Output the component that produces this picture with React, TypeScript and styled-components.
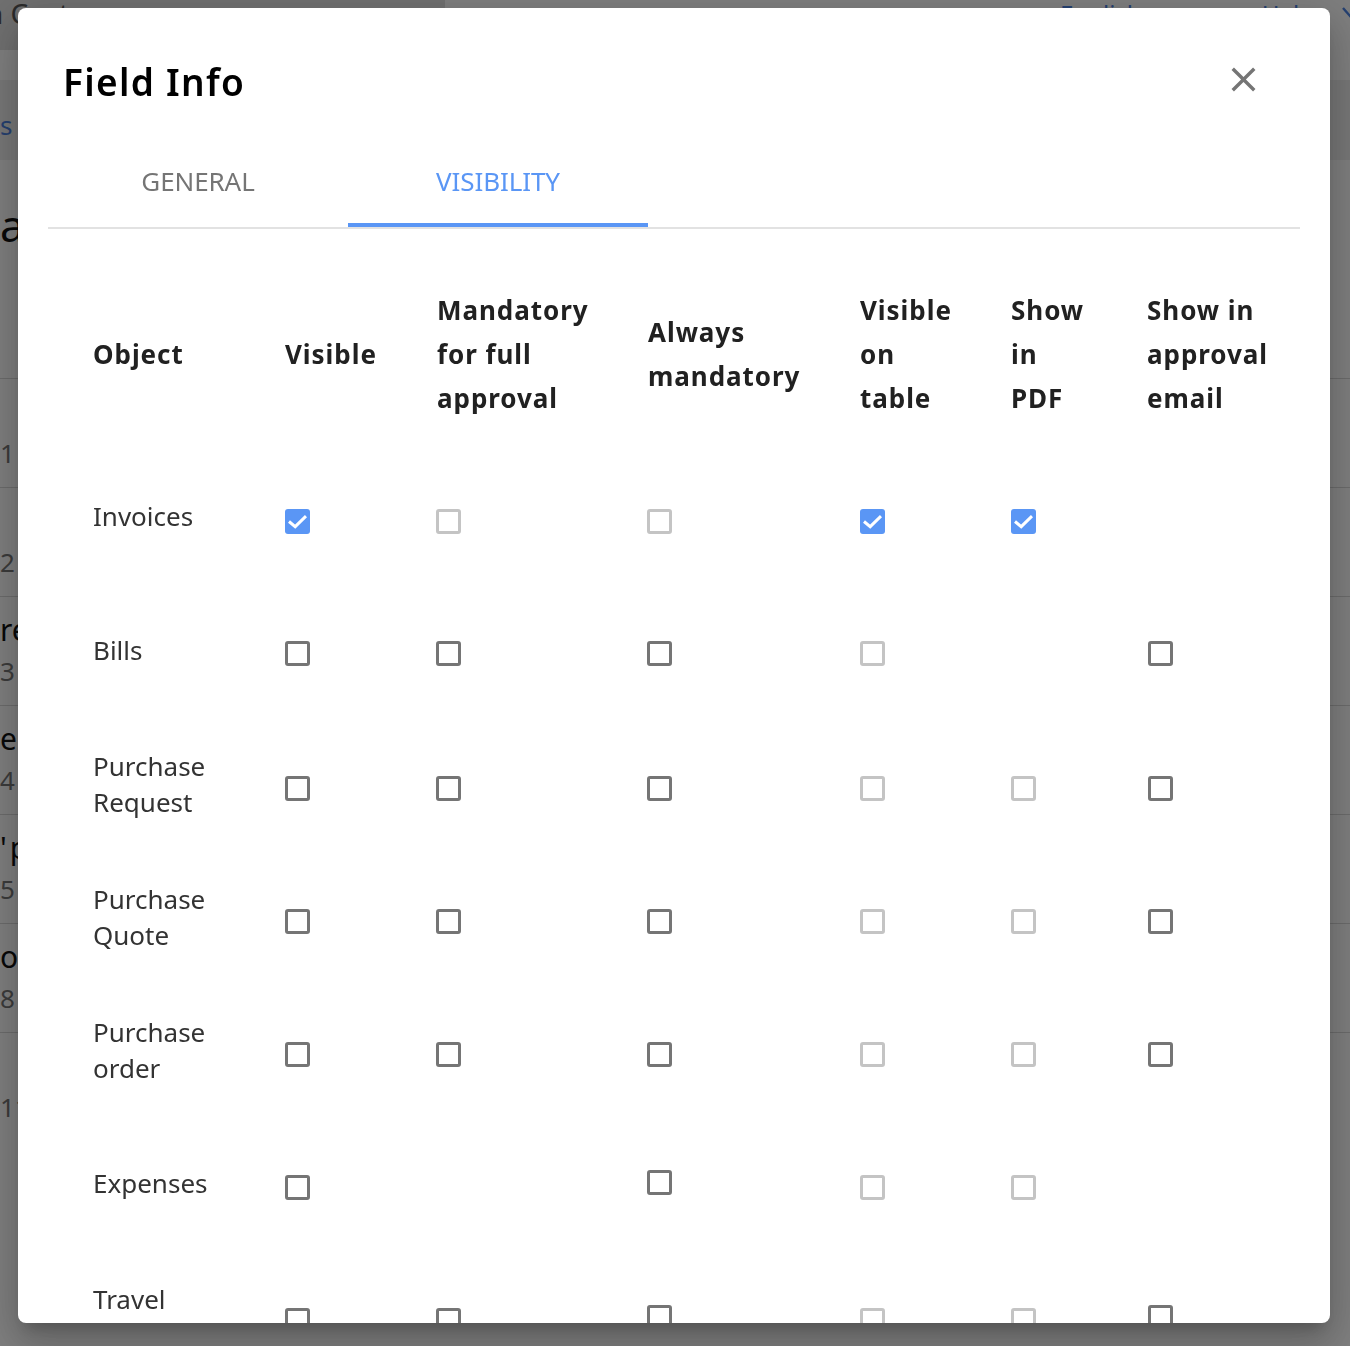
import React from "react";
import { createGlobalStyle, styled } from "styled-components";

type Check = "on" | "off" | "muted" | null;

const COLUMNS = ["Visible", "Mandatory for full approval", "Always mandatory", "Visible on table", "Show in PDF", "Show in approval email"];

const OBJECTS: { name: string; checks: Check[]; height?: number; checkLift?: number; labelLift?: number; alwaysLift?: number; emailLift?: number }[] = [
  { name: "Invoices", checks: ["on", "muted", "muted", "on", "on", null], labelLift: 12 },
  { name: "Bills", checks: ["off", "off", "off", "muted", null, "off"], height: 134, checkLift: 3, labelLift: 11 },
  { name: "Purchase Request", checks: ["off", "off", "off", "muted", "muted", "off"] },
  { name: "Purchase Quote", checks: ["off", "off", "off", "muted", "muted", "off"] },
  { name: "Purchase order", checks: ["off", "off", "off", "muted", "muted", "off"] },
  { name: "Expenses", checks: ["off", null, "off", "muted", "muted", null], alwaysLift: 10 },
  { name: "Travel", checks: ["off", "off", "off", "muted", "muted", "off"], labelLift: 44, alwaysLift: 6, emailLift: 6 },
];

const BACK_ROWS = [
  { title: "", count: "1" },
  { title: "", count: "2" },
  { title: "re", count: "3" },
  { title: "e", count: "4" },
  { title: "'\u200Ap", count: "5" },
  { title: "oc", count: "8" },
  { title: "", count: "11" },
];

const App = () => {
  return (
    <>
      <GlobalStyle />
      <Page>
        <TopBar>
          <TopLeft>n Customers</TopLeft>
          <TopLinks>
            <span>English</span>
            <HelpLink>
              Help
              <svg width="16" height="16" viewBox="0 0 16 16" fill="none">
                <path d="M1 4 8 12 15 4" stroke="#4a80e0" strokeWidth="2.4" />
              </svg>
            </HelpLink>
          </TopLinks>
        </TopBar>
        <SubNav>s</SubNav>
        <PageTitle>a</PageTitle>
        {BACK_ROWS.map((row) => (
          <BackRow key={row.count}>
            <BackTitle>{row.title}</BackTitle>
            <BackCount>{row.count}</BackCount>
          </BackRow>
        ))}
      </Page>
      <Overlay>
        <Modal>
          <ModalHeader>
            <ModalTitle>Field Info</ModalTitle>
            <CloseButton aria-label="Close">
              <svg width="41" height="41" viewBox="0 0 24 24" fill="#757575">
                <path d="M19 6.41 17.59 5 12 10.59 6.41 5 5 6.41 10.59 12 5 17.59 6.41 19 12 13.41 17.59 19 19 17.59 13.41 12z" />
              </svg>
            </CloseButton>
          </ModalHeader>
          <TabBar>
            <Tab>GENERAL</Tab>
            <Tab $active>VISIBILITY</Tab>
          </TabBar>
          <HeadRow>
            <HeadCell>Object</HeadCell>
            {COLUMNS.map((col) => (
              <HeadCell key={col} $narrow={col.length < 17}>
                {col}
              </HeadCell>
            ))}
          </HeadRow>
          {OBJECTS.map((row) => (
            <Row key={row.name} $height={row.height ?? 133}>
              <RowLabel $lift={row.labelLift ?? 10}>{row.name}</RowLabel>
              {row.checks.map((state, i) => {
                const lift = i === 2 ? row.alwaysLift : i === 5 ? row.emailLift : row.checkLift;
                return (
                  <CheckCell key={i}>
                    {state && (
                      <CheckBox $state={state} $lift={lift ?? row.checkLift ?? 0}>
                        {state === "on" && (
                          <svg width="19" height="19" viewBox="0 0 19 19" fill="none">
                            <path d="M1 9.5 7.2 14.7 18 4.2" stroke="#fff" strokeWidth="3" />
                          </svg>
                        )}
                      </CheckBox>
                    )}
                  </CheckCell>
                );
              })}
            </Row>
          ))}
        </Modal>
      </Overlay>
    </>
  );
};

export default App;

const GlobalStyle = createGlobalStyle`
  html, body {
    margin: 0;
    height: 100%;
    background: #fff;
    overflow: hidden;
  }
  body {
    font-family: "Noto Sans", "Open Sans", sans-serif;
  }
`;

const Page = styled.div`
  height: 1346px;
  overflow: hidden;
  background: #fff;
  color: #111;
`;
const TopBar = styled.div`
  height: 50px;
  display: flex;
  justify-content: space-between;
  background: #fdfdfd;
`;
const TopLeft = styled.div`
  width: 459px;
  height: 50px;
  background: #e0e0e0;
  font-size: 28px;
  line-height: 26px;
  color: #555;
  margin-left: -14px;
`;
const TopLinks = styled.div`
  width: 290px;
  display: flex;
  gap: 120px;
  font-size: 24px;
  line-height: 28px;
  color: #4a80e0;
`;
const HelpLink = styled.span`
  display: flex;
  gap: 28px;
  align-items: flex-start;
  svg {
    flex: none;
    margin-top: 4px;
  }
`;
const SubNav = styled.div`
  margin-top: 30px;
  height: 80px;
  background: #f0f0f0;
  font-size: 26px;
  line-height: 90px;
  color: #4a80e0;
`;
const PageTitle = styled.div`
  height: 218px;
  font-size: 44px;
  line-height: 130px;
`;
const BackRow = styled.div`
  height: 108px;
  border-top: 1px solid #d8d8d8;
`;
const BackTitle = styled.div`
  height: 54px;
  padding-top: 15px;
  box-sizing: border-box;
  font-size: 30px;
  line-height: 36px;
`;
const BackCount = styled.div`
  font-size: 26px;
  line-height: 40px;
  color: #777;
`;

const Overlay = styled.div`
  position: fixed;
  inset: 0;
  background: rgba(0, 0, 0, 0.5);
`;
const Modal = styled.div`
  position: absolute;
  left: 18px;
  top: 8px;
  width: 1312px;
  height: 1315px;
  background: #fff;
  border-radius: 8px;
  overflow: hidden;
  box-shadow:
    0 11px 15px -7px rgba(0, 0, 0, 0.2),
    0 24px 38px 3px rgba(0, 0, 0, 0.14),
    0 9px 46px 8px rgba(0, 0, 0, 0.12);
`;
const ModalHeader = styled.div`
  height: 128px;
  box-sizing: border-box;
  padding: 50px 66px 0 45px;
  display: flex;
  justify-content: space-between;
  align-items: flex-start;
`;
const ModalTitle = styled.h2`
  margin: 0;
  font-size: 37px;
  line-height: 48px;
  font-weight: 600;
  letter-spacing: 1.3px;
  color: #000;
`;
const CloseButton = styled.button`
  width: 41px;
  height: 41px;
  margin-top: 1px;
  padding: 0;
  border: 0;
  background: none;
  display: flex;
`;
const TabBar = styled.div`
  margin: 0 30px;
  height: 93px;
  box-sizing: border-box;
  display: flex;
  border-bottom: 2px solid #e2e2e2;
`;
const Tab = styled.div<{ $active?: boolean }>`
  width: 300px;
  height: 91px;
  box-sizing: border-box;
  display: flex;
  align-items: center;
  justify-content: center;
  padding-top: 2px;
  font-size: 26px;
  letter-spacing: -0.1px;
  color: ${(p) => (p.$active ? "#5a96f5" : "#757575")};
  border-bottom: 4px solid ${(p) => (p.$active ? "#5a96f5" : "transparent")};
`;
const HeadRow = styled.div`
  margin: 59px 0 35px 75px;
  height: 132px;
  display: grid;
  grid-template-columns: 192px 152px 211px 212px 151px 136px 1fr;
  align-items: center;
`;
const HeadCell = styled.div<{ $narrow?: boolean }>`
  font-size: 26px;
  line-height: 44px;
  font-weight: 700;
  letter-spacing: 0.95px;
  color: #212121;
  max-width: ${(p) => (p.$narrow ? "80px" : "170px")};
`;
const Row = styled.div<{ $height: number }>`
  margin-left: 75px;
  height: ${(p) => p.$height}px;
  display: grid;
  grid-template-columns: 192px 151px 211px 213px 151px 137px 1fr;
  align-items: center;
`;
const RowLabel = styled.div<{ $lift: number }>`
  font-size: 26px;
  line-height: 36px;
  color: #333;
  max-width: 150px;
  margin-bottom: ${(p) => p.$lift}px;
`;
const CheckCell = styled.div`
  display: flex;
  align-items: center;
`;
const CheckBox = styled.div<{ $state: string; $lift: number }>`
  width: 25px;
  height: 25px;
  box-sizing: border-box;
  border-radius: 3px;
  display: flex;
  align-items: center;
  justify-content: center;
  margin-bottom: ${(p) => p.$lift}px;
  background: ${(p) => (p.$state === "on" ? "#5a96f5" : "#fff")};
  border: ${(p) =>
    p.$state === "on"
      ? "0"
      : p.$state === "muted"
        ? "3px solid #c4c4c4"
        : "3px solid #757575"};
`;
